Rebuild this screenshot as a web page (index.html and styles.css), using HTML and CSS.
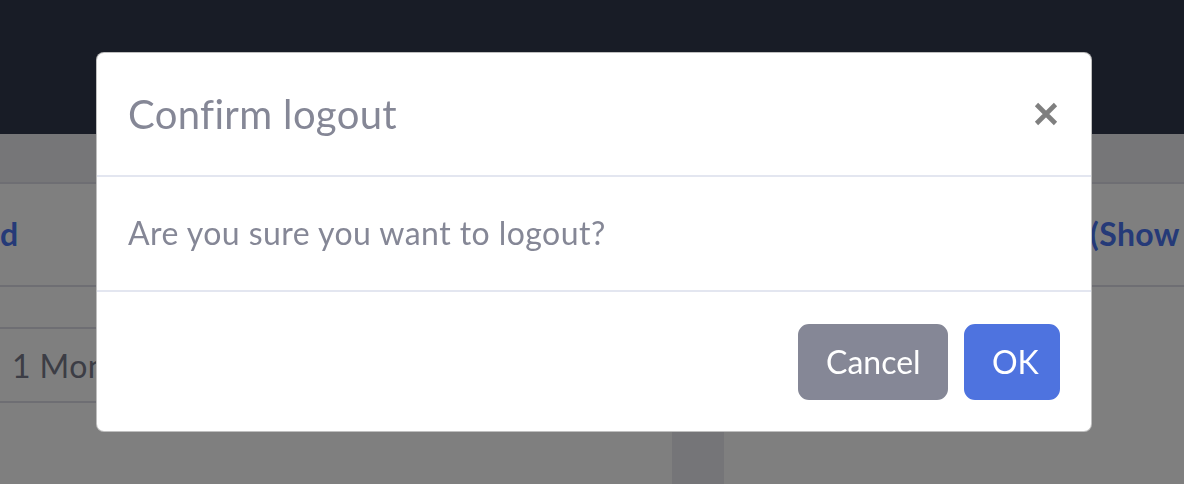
FILE: index.html
```html
<!DOCTYPE html>
<html lang="en">
<head>
<meta charset="utf-8">
<title>Confirm logout</title>
<link rel="stylesheet" href="styles.css">
</head>
<body>
<div class="page">
  <header class="topbar"></header>
  <div class="subbar"></div>
  <main class="main">
    <section class="panel left">
      <div class="row head"><span class="th">d</span></div>
      <div class="row spacer"></div>
      <div class="row body"><span class="td">1 Month</span></div>
    </section>
    <div class="gutter"></div>
    <section class="panel right">
      <div class="row head"><span class="th show">(Show</span></div>
    </section>
  </main>
</div>

<div class="backdrop"></div>
<div class="modal-wrap">
  <div class="modal" role="dialog" aria-labelledby="modal-title">
    <div class="modal-header">
      <h5 class="modal-title" id="modal-title">Confirm logout</h5>
      <button class="close" type="button" aria-label="Close">
        <svg viewBox="0 0 24 24" width="24" height="24" aria-hidden="true">
          <path d="M2.5 2.5 L21.5 21.5 M21.5 2.5 L2.5 21.5" />
        </svg>
      </button>
    </div>
    <div class="modal-body">Are you sure you want to logout?</div>
    <div class="modal-footer">
      <button class="btn btn-secondary" type="button">Cancel</button>
      <button class="btn btn-primary" type="button">OK</button>
    </div>
  </div>
</div>
</body>
</html>
```

FILE: styles.css
```css
* { box-sizing: border-box; }

html, body {
  margin: 0;
  height: 100%;
  overflow: hidden;
}

body {
  font-family: Lato, "Open Sans", "Noto Sans", sans-serif;
  background: #ffffff;
  color: #858796;
}

.page {
  display: flex;
  flex-direction: column;
  height: 100vh;
}

.topbar {
  height: 134px;
  background: #30384c;
  flex: none;
}

.subbar {
  height: 50px;
  background: #ececf0;
  border-bottom: 2px solid #dcdde6;
  flex: none;
}

.main {
  display: flex;
  flex: 1;
}

.panel {
  display: flex;
  flex-direction: column;
  overflow: hidden;
}

.left { width: 672px; flex: none; }
.right { flex: 1; }

.gutter {
  width: 52px;
  flex: none;
  background: #eaeaf0;
}

.row {
  display: flex;
  align-items: center;
  white-space: nowrap;
  border-bottom: 2px solid #dcdde6;
}

.row.head { height: 103px; }
.row.spacer { height: 42px; }
.row.body { height: 74px; }

.th {
  font-weight: 700;
  font-size: 32px;
  color: #4a74f0;
  margin-top: -3px;
}

.left .th { padding-left: 0; }
.right .th { padding-left: 366px; letter-spacing: 0.4px; }

.td {
  font-size: 32px;
  color: #797b8a;
  padding-left: 12px;
  letter-spacing: 0.4px;
}

.backdrop {
  position: fixed;
  inset: 0;
  background: rgba(0, 0, 0, 0.5);
}

.modal-wrap {
  position: fixed;
  inset: 0;
  display: flex;
  align-items: flex-start;
  padding: 52px 0 0 96px;
}

.modal {
  width: 996px;
  background: #ffffff;
  border: 1px solid rgba(0, 0, 0, 0.25);
  border-radius: 8px;
  display: flex;
  flex-direction: column;
  overflow: hidden;
}

.modal-header {
  display: flex;
  align-items: center;
  justify-content: space-between;
  padding: 31px 33px 31px 31px;
  border-bottom: 2px solid #e3e6f0;
}

.modal-title {
  margin: 0;
  font-size: 40px;
  font-weight: 400;
  line-height: 60px;
  letter-spacing: 0.35px;
  color: #858796;
}

.close {
  border: 0;
  background: none;
  padding: 0;
  width: 24px;
  height: 24px;
  display: flex;
  cursor: pointer;
}

.close svg path {
  stroke: #7f7f7f;
  stroke-width: 4.6;
  fill: none;
}

.modal-body {
  padding: 32px 31px 33px;
  font-size: 32px;
  line-height: 48px;
  letter-spacing: 0.45px;
  color: #858796;
  border-bottom: 2px solid #e3e6f0;
}

.modal-footer {
  display: flex;
  justify-content: flex-end;
  gap: 16px;
  padding: 32px 31px 31px;
}

.btn {
  font-family: inherit;
  font-size: 32px;
  line-height: 48px;
  height: 76px;
  padding: 12px 26px;
  border: 2px solid transparent;
  border-radius: 11px;
  color: #ffffff;
  cursor: pointer;
}

.btn-secondary {
  background: #858796;
  border-color: #858796;
  width: 150px;
}

.btn-primary {
  background: #4e73df;
  border-color: #4e73df;
  width: 96px;
}
```
